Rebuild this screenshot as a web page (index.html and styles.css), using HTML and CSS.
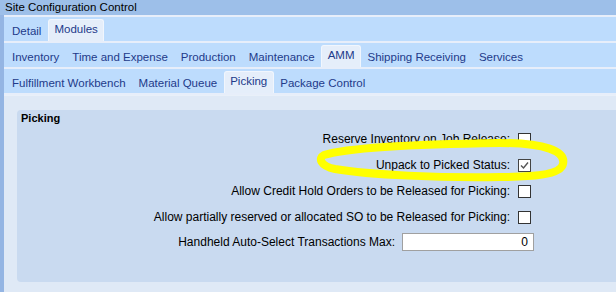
FILE: index.html
```html
<!DOCTYPE html>
<html>
<head>
<meta charset="utf-8">
<link rel="stylesheet" href="styles.css">
</head>
<body>
<div class="window">
  <div class="titlebar">Site Configuration Control</div>
  <div class="frame">
    <div class="tabrow">
      <span class="tab">Detail</span>
      <span class="tab active">Modules</span>
    </div>
    <div class="tabrow">
      <span class="tab">Inventory</span>
      <span class="tab">Time and Expense</span>
      <span class="tab">Production</span>
      <span class="tab">Maintenance</span>
      <span class="tab active">AMM</span>
      <span class="tab">Shipping Receiving</span>
      <span class="tab">Services</span>
    </div>
    <div class="tabrow">
      <span class="tab">Fulfillment Workbench</span>
      <span class="tab">Material Queue</span>
      <span class="tab active">Picking</span>
      <span class="tab">Package Control</span>
    </div>
    <div class="content">
      <div class="group">
        <div class="group-title">Picking</div>
        <div class="fields">
          <div class="field"><span class="label">Reserve Inventory on Job Release:</span><span class="check"></span></div>
          <div class="field"><span class="label">Unpack to Picked Status:</span><span class="check checked"><svg viewBox="0 0 11 11" width="11" height="11"><polyline points="2,5.5 4.5,8 9,2.5" fill="none" stroke="#555" stroke-width="1.4"/></svg></span></div>
          <div class="field"><span class="label">Allow Credit Hold Orders to be Released for Picking:</span><span class="check"></span></div>
          <div class="field"><span class="label">Allow partially reserved or allocated SO to be Released for Picking:</span><span class="check"></span></div>
          <div class="field last"><span class="label">Handheld Auto-Select Transactions Max:</span><span class="numbox">0</span></div>
        </div>
      </div>
    </div>
  </div>
  <svg class="highlight" width="616" height="292" viewBox="0 0 616 292">
    <path d="M 324 155 C 350 147, 430 144, 500 143 C 545 143, 566 151, 563 164 C 561 175, 530 177, 500 177 C 440 178, 370 175, 335 169 C 320 166, 318 158, 324 155 Z" fill="none" stroke="#ffff00" stroke-width="8" stroke-linecap="round" stroke-linejoin="round"/>
  </svg>
</div>
</body>
</html>
```
FILE: styles.css
```css
body {
  margin: 0;
  background: #dfe9f6;
  overflow: hidden;
  font-family: "Liberation Sans", Arial, sans-serif;
}
.window {
  position: relative;
  width: 616px;
  height: 292px;
  overflow: hidden;
}
.titlebar {
  height: 15px;
  line-height: 15px;
  background: #9dbfe9;
  color: #000;
  font-size: 11.5px;
  padding-left: 5px;
}
.frame {
  border-left: 4px solid #94b5e3;
  background: #e7eefa;
  padding-top: 2px;
  height: 277px;
  box-sizing: border-box;
}
.tabrow {
  display: flex;
  align-items: flex-end;
  background: #bddcfd;
  height: 24px;
  padding-left: 1.5px;
  margin-bottom: 2px;
}
.tab {
  box-sizing: border-box;
  height: 22px;
  padding: 5px 6.5px 0;
  line-height: 14px;
  font-size: 11.5px;
  color: #223a8a;
  white-space: nowrap;
}
.tab.active {
  background: #e5eefa;
  border: 1px solid #f1f6fd;
  border-bottom: none;
  border-radius: 3px 3px 0 0;
  padding: 2px 5.5px 0;
}
.content {
  background: #dfe9f6;
  border-top: 1px solid #e9f0f9;
  padding: 14px 0 0 13px;
  height: 199px;
  box-sizing: border-box;
}
.group {
  background: #c9daf0;
  border-radius: 4px 0 0 4px;
  height: 172px;
  margin-right: -8px;
}
.group-title {
  height: 16px;
  line-height: 16px;
  padding-left: 4px;
  font-size: 11px;
  font-weight: bold;
  color: #000;
}
.fields {
  width: 517px;
}
.field {
  display: flex;
  justify-content: flex-end;
  align-items: center;
  height: 26px;
  gap: 8px;
}
.field.last {
  height: 24px;
  gap: 7px;
}
.label {
  font-size: 12px;
  color: #000;
  white-space: nowrap;
}
.check {
  box-sizing: border-box;
  width: 13px;
  height: 13px;
  border: 1px solid #333;
  background: #fff;
  margin-right: 3px;
  display: flex;
  align-items: center;
  justify-content: center;
}
.check.checked {
  border-color: #444;
}
.numbox {
  box-sizing: border-box;
  width: 132px;
  height: 18px;
  border: 1px solid #a0a0a0;
  background: #fff;
  font-size: 12px;
  line-height: 16px;
  text-align: right;
  padding-right: 5px;
  color: #000;
}
.highlight {
  position: absolute;
  top: 0;
  left: 0;
  pointer-events: none;
}
```
